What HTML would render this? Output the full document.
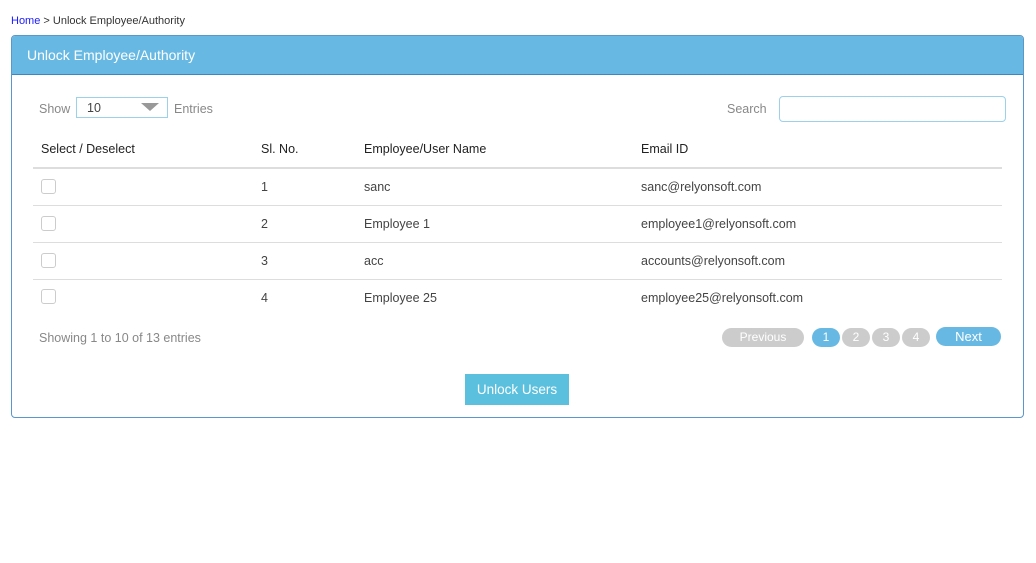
<!DOCTYPE html>
<html><head><style>
body{margin:0;background:#fff;font-family:"Liberation Sans",sans-serif;width:1036px;height:563px;position:relative;overflow:hidden}
.a{position:absolute;white-space:nowrap}
.bc{left:11px;top:15px;font-size:11px;color:#333}
.bc span{color:#1a1aff}
.panel{position:absolute;left:11px;top:35px;width:1013px;height:383px;border:1px solid #5b97c9;border-radius:4px;box-sizing:border-box;overflow:hidden}
.hd{position:absolute;left:0;top:0;right:0;height:38px;background:#67b9e3;border-bottom:1px solid #3d86c0;color:#fff;font-size:14px;line-height:38px;padding-left:15px}
.g{color:#888;font-size:12.5px}
.t{color:#444;font-size:12.5px}
.h{color:#222;font-size:12.5px}
.hr{position:absolute;left:21px;width:969px;height:1px;background:#ddd}
.cb{position:absolute;left:29px;width:15px;height:15px;border:1px solid #ccc;border-radius:3px;box-sizing:border-box}
.pill{position:absolute;height:19px;border-radius:10px;background:#ccc;color:#fff;font-size:12px;line-height:19px;text-align:center}
</style></head><body>
<div class="a bc"><span>Home</span> &gt; Unlock Employee/Authority</div>
<div class="panel">
<div class="hd">Unlock Employee/Authority</div>
<div class="a g" style="left:27px;top:66px">Show</div>
<div class="a" style="left:64px;top:61px;width:92px;height:21px;border:1px solid #9cd1ec;box-sizing:border-box"></div>
<div class="a t" style="left:75px;top:65px">10</div>
<div class="a" style="left:129px;top:67px;width:0;height:0;border-left:9px solid transparent;border-right:9px solid transparent;border-top:8px solid #999"></div>
<div class="a g" style="left:162px;top:66px">Entries</div>
<div class="a g" style="left:715px;top:66px">Search</div>
<div class="a" style="left:767px;top:60px;width:227px;height:26px;border:1px solid #9cd1ec;border-radius:4px;box-sizing:border-box"></div>
<div class="a h" style="left:29px;top:106px">Select / Deselect</div>
<div class="a h" style="left:249px;top:106px">Sl. No.</div>
<div class="a h" style="left:352px;top:106px">Employee/User Name</div>
<div class="a h" style="left:629px;top:106px">Email ID</div>
<div class="hr" style="top:131px;height:2px"></div>
<div class="cb" style="top:143px"></div><div class="a t" style="left:249px;top:144px">1</div><div class="a t" style="left:352px;top:144px">sanc</div><div class="a t" style="left:629px;top:144px">sanc@relyonsoft.com</div>
<div class="hr" style="top:169px"></div>
<div class="cb" style="top:180px"></div><div class="a t" style="left:249px;top:181px">2</div><div class="a t" style="left:352px;top:181px">Employee 1</div><div class="a t" style="left:629px;top:181px">employee1@relyonsoft.com</div>
<div class="hr" style="top:206px"></div>
<div class="cb" style="top:217px"></div><div class="a t" style="left:249px;top:218px">3</div><div class="a t" style="left:352px;top:218px">acc</div><div class="a t" style="left:629px;top:218px">accounts@relyonsoft.com</div>
<div class="hr" style="top:243px"></div>
<div class="cb" style="top:253px"></div><div class="a t" style="left:249px;top:255px">4</div><div class="a t" style="left:352px;top:255px">Employee 25</div><div class="a t" style="left:629px;top:255px">employee25@relyonsoft.com</div>
<div class="a g" style="left:27px;top:295px">Showing 1 to 10 of 13 entries</div>
<div class="pill" style="left:710px;top:292px;width:82px">Previous</div>
<div class="pill" style="left:800px;top:292px;width:28px;background:#67b9e3">1</div>
<div class="pill" style="left:830px;top:292px;width:28px">2</div>
<div class="pill" style="left:860px;top:292px;width:28px">3</div>
<div class="pill" style="left:890px;top:292px;width:28px">4</div>
<div class="pill" style="left:924px;top:291px;width:65px;background:#67b9e3;font-size:13px">Next</div>
<div class="a" style="left:453px;top:338px;width:104px;height:31px;background:#5bc0de;color:#fff;font-size:13.5px;line-height:31px;text-align:center">Unlock Users</div>
</div>
</body></html>
